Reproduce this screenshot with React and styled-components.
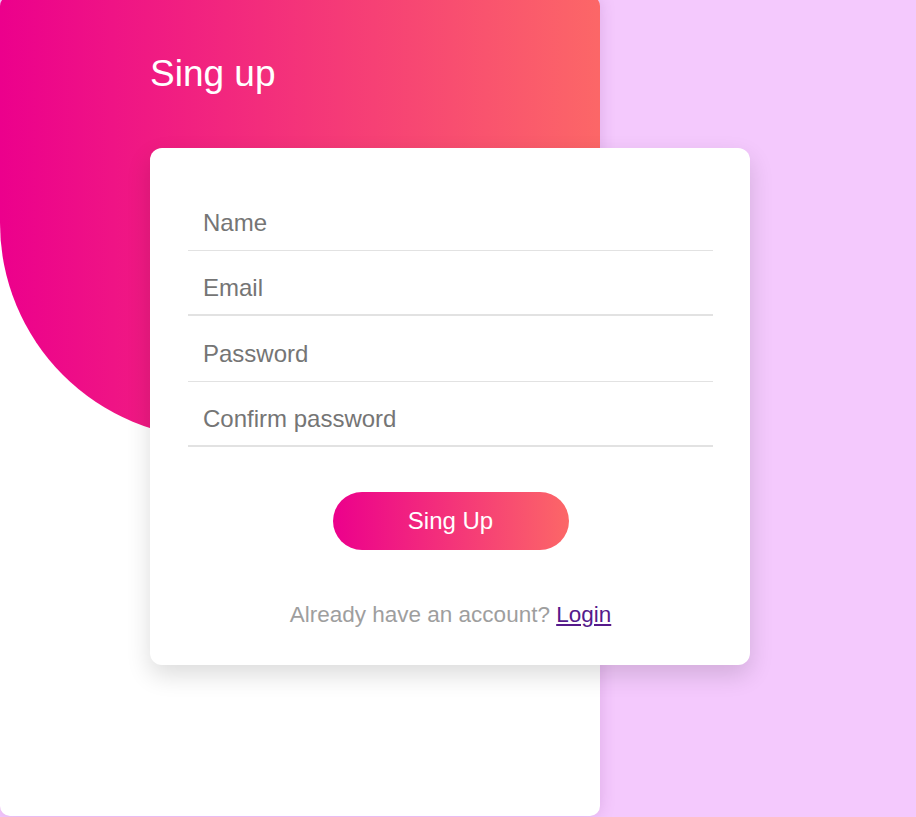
import React from "react";
import styled, { createGlobalStyle } from "styled-components";

const GlobalStyle = createGlobalStyle`
  html, body {
    margin: 0;
    padding: 0;
    height: 100%;
    overflow: hidden;
    background: #f4c9fd;
    font-family: "Liberation Sans", Arial, sans-serif;
  }
  * { box-sizing: border-box; }
`;

const gradient = "linear-gradient(to right, #ec008c, #fc6767)";

const Page = styled.div`
  display: flex;
  align-items: flex-start;
  min-height: 100vh;
  background: #f4c9fd;
`;

const Panel = styled.div`
  position: relative;
  width: 600px;
  height: 819.5px;
  margin-top: -4px;
  padding: 56.5px 0 0 150px;
  background: #ffffff;
  border-radius: 10px;
  box-shadow: 0 0 16px rgba(120, 40, 130, 0.18);
`;

const HeaderShape = styled.div`
  position: absolute;
  top: 0;
  left: 0;
  right: 0;
  height: 442px;
  background: ${gradient};
  border-radius: 10px 10px 0 215px;
`;

const Title = styled.h1`
  position: relative;
  margin: 0;
  font-size: 37px;
  font-weight: 400;
  line-height: normal;
  color: #ffffff;
`;

const Card = styled.div`
  position: relative;
  width: 600px;
  margin-top: 53px;
  padding: 37px 37px 37px 38px;
  background: #ffffff;
  border-radius: 12px;
  box-shadow: 0 10px 25px rgba(0, 0, 0, 0.14);
  display: flex;
  flex-direction: column;
  align-items: stretch;
`;

const Form = styled.form`
  display: flex;
  flex-direction: column;
  gap: 12px;
  margin: 0;
  padding-top: 12.5px;
`;

const Field = styled.input`
  display: block;
  width: 100%;
  height: 53.5px;
  margin: 0;
  padding: 0 15px;
  border: none;
  border-bottom: ${(p) => (p.$thick ? "2px" : "1px")} solid #e2e2e2;
  outline: none;
  background: transparent;
  font-family: inherit;
  font-size: 24px;
  color: #333;
  &::placeholder {
    color: #757575;
    opacity: 1;
  }
`;

const Button = styled.button`
  align-self: center;
  width: 236px;
  height: 58px;
  margin-top: 45px;
  border: none;
  border-radius: 29px;
  background: ${gradient};
  color: #ffffff;
  font-family: inherit;
  font-size: 24px;
  cursor: pointer;
`;

const Footer = styled.p`
  margin: 52px 0 0;
  text-align: center;
  font-size: 22.5px;
  line-height: normal;
  color: #9e9e9e;
`;

const LoginLink = styled.a`
  color: #551a8b;
  text-decoration: underline;
`;

const fields = [
  { placeholder: "Name", type: "text" },
  { placeholder: "Email", type: "email", thick: true },
  { placeholder: "Password", type: "password" },
  { placeholder: "Confirm password", type: "password", thick: true },
];

export default function App() {
  return (
    <>
      <GlobalStyle />
      <Page>
        <Panel>
          <HeaderShape />
          <Title>Sing up</Title>
          <Card>
            <Form onSubmit={(e) => e.preventDefault()}>
              {fields.map((f) => (
                <Field
                  key={f.placeholder}
                  type={f.type}
                  placeholder={f.placeholder}
                  $thick={f.thick}
                />
              ))}
            </Form>
            <Button type="button">Sing Up</Button>
            <Footer>
              Already have an account? <LoginLink href="#">Login</LoginLink>
            </Footer>
          </Card>
        </Panel>
      </Page>
    </>
  );
}
